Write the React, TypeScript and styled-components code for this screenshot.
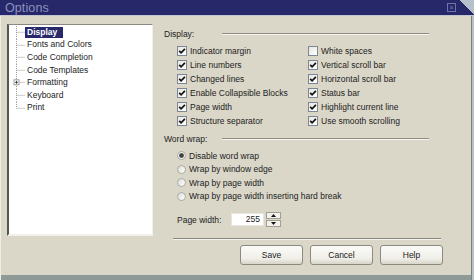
import * as React from 'react';
import styled, { createGlobalStyle } from 'styled-components';

const GlobalStyle = createGlobalStyle`
  html, body {
    margin: 0;
    padding: 0;
    background: #b7c1c9;
  }
  body {
    font-family: "Liberation Sans", Arial, sans-serif;
    font-size: 8.5px;
    color: #1c1c1c;
  }
`;

const Frame = styled.div`
  width: 474px;
  height: 280px;
  display: flex;
  flex-direction: column;
  overflow: hidden;
  background: #b7c1c9;
`;

const TitleBar = styled.div`
  height: 15px;
  flex: none;
  display: flex;
  align-items: center;
  justify-content: space-between;
  padding: 0 18px 0 5px;
  background: linear-gradient(225deg, #b5c0cb 0 10.5px, #26286a 10.5px);
  border-bottom: 1px solid #c3c6d2;
`;

const Title = styled.span`
  font-size: 12.5px;
  color: #8d93bd;
  letter-spacing: 0.1px;
  line-height: 15px;
  margin-top: 1px;
`;

const CloseBox = styled.span`
  width: 7px;
  height: 7px;
  border: 1px solid #6d74a6;
  display: flex;
  align-items: center;
  justify-content: center;
  color: #7a82b4;
  font-size: 7px;
  line-height: 1;
`;

const Body = styled.div`
  flex: 1;
  display: flex;
  flex-direction: column;
  background: #dad7c9;
  border-left: 1px solid #eeede6;
  border-right: 1px solid #7e8078;
  margin-right: 2px;
`;

const Main = styled.div`
  display: flex;
  padding: 8px 0 0 6px;
  height: 211px;
`;

const TreePanel = styled.div`
  width: 143px;
  height: 208px;
  flex: none;
  background: #fff;
  border-top: 1px solid #8c8a80;
  border-left: 2px solid #55554e;
  border-right: 1px solid #f1f0ea;
  border-bottom: 2px solid #f1f0ea;
  padding-top: 1px;
  display: flex;
  flex-direction: column;
`;

const TreeRow = styled.div`
  height: 12.6px;
  display: flex;
  align-items: center;
`;

const TreeLabel = styled.span<{ $selected?: boolean }>`
  padding: 1px 2px;
  line-height: 9px;
  background: ${p => (p.$selected ? '#27296a' : 'transparent')};
  color: ${p => (p.$selected ? '#fff' : '#1c1c1c')};
  font-weight: ${p => (p.$selected ? 'bold' : 'normal')};
  ${p => (p.$selected ? 'padding-right: 6px;' : '')}
`;

const Settings = styled.div`
  flex: none;
  width: 265px;
  display: flex;
  flex-direction: column;
  padding: 4px 0 0 11px;
`;

const SectionHead = styled.div<{ $gap?: number }>`
  display: flex;
  align-items: center;
  height: 12px;
  margin-top: ${p => p.$gap ?? 0}px;
`;

const SectionLabel = styled.span`
  width: 58px;
  flex: none;
`;

const Etched = styled.div`
  flex: 1;
  height: 0;
  border-top: 1px solid #8d8c80;
  border-bottom: 1px solid #f6f5ef;
`;

const CheckGrid = styled.div`
  display: grid;
  grid-template-columns: 131px 1fr;
  margin: 4px 0 0 13px;
`;

const OptionRow = styled.label<{ $h?: number }>`
  height: ${p => p.$h ?? 14}px;
  display: flex;
  align-items: center;
  gap: 3px;
  white-space: nowrap;
`;

const Box = styled.span`
  width: 8px;
  height: 8px;
  flex: none;
  border: 1px solid #7b8796;
  background: linear-gradient(135deg, #e6e5df, #fff);
  display: flex;
  align-items: center;
  justify-content: center;
`;

const RadioList = styled.div`
  display: flex;
  flex-direction: column;
  margin: 4px 0 0 13px;
`;

const RadioDot = styled.span<{ $on?: boolean }>`
  width: 7px;
  height: 7px;
  flex: none;
  border-radius: 50%;
  border: 1px solid #a9aba4;
  background: ${p => (p.$on
    ? 'radial-gradient(circle, #3d4140 0 1.8px, #9ea19d 2.4px, #f3f3ee 3px)'
    : 'linear-gradient(135deg, #dcdbd4, #fff)')};
`;

const WidthRow = styled.div`
  display: flex;
  align-items: center;
  margin: 10px 0 0 13px;
  height: 13px;
`;

const WidthLabel = styled.span`
  width: 54px;
`;

const NumberField = styled.span`
  width: 28px;
  height: 11px;
  background: #fff;
  border: 1px solid #e8e6de;
  text-align: right;
  padding-right: 3px;
  line-height: 11px;
  box-sizing: content-box;
`;

const Spinner = styled.span`
  display: flex;
  flex-direction: column;
  gap: 1px;
  margin-left: 2px;
`;

const SpinButton = styled.span`
  width: 13px;
  height: 5px;
  border: 1px solid #a19f94;
  background: #f2f1eb;
  display: flex;
  align-items: center;
  justify-content: center;
`;

const Footer = styled.div`
  display: flex;
  flex-direction: column;
  align-items: flex-end;
  padding: 3px 28px 0 0;
`;

const FooterRule = styled.div`
  width: 268px;
  margin-right: 2px;
  border-top: 1px solid #86867a;
  border-bottom: 1px solid #f4f3ec;
`;

const ButtonRow = styled.div`
  display: flex;
  gap: 7px;
  margin-top: 5px;
`;

const Button = styled.button`
  width: 63px;
  height: 20px;
  padding: 0;
  font-family: inherit;
  font-size: 8.5px;
  color: #1c1c1c;
  border: 1px solid #8c8a7f;
  border-radius: 3px;
  background: linear-gradient(#fbfbf8, #efeee8 70%, #d8d4c8);
`;

const BottomEdge = styled.div`
  margin-top: auto;
  height: 5px;
  background: #8e9a97;
`;

const Check = () => (
  <svg width="8" height="8" viewBox="0 0 8 8">
    <path d="M1.2 3.8 L3.1 5.8 L6.9 1.9" fill="none" stroke="#111" strokeWidth="1.7" />
  </svg>
);

const TreeLines = ({ last, expander }: { last?: boolean; expander?: boolean }) => (
  <svg width="16" height="12.6" viewBox="0 0 16 12.6" style={{ flex: 'none' }}>
    <line x1="7.5" y1="0" x2="7.5" y2={last ? 6.3 : 12.6} stroke="#9a9a9a" strokeDasharray="1 1" />
    <line x1="7.5" y1="6.3" x2="16" y2="6.3" stroke="#9a9a9a" strokeDasharray="1 1" />
    {expander && (
      <g>
        <rect x="5" y="3.8" width="5" height="5" fill="#fff" stroke="#8a8a8a" strokeWidth="0.8" />
        <line x1="6" y1="6.3" x2="9" y2="6.3" stroke="#222" strokeWidth="0.8" />
        <line x1="7.5" y1="4.8" x2="7.5" y2="7.8" stroke="#222" strokeWidth="0.8" />
      </g>
    )}
  </svg>
);

const Arrow = ({ up }: { up?: boolean }) => (
  <svg width="5" height="3" viewBox="0 0 5 3">
    <path d={up ? 'M0 3 L2.5 0 L5 3 Z' : 'M0 0 L2.5 3 L5 0 Z'} fill="#111" />
  </svg>
);

const treeItems = [
  { label: 'Display', selected: true },
  { label: 'Fonts and Colors' },
  { label: 'Code Completion' },
  { label: 'Code Templates' },
  { label: 'Formatting', expander: true },
  { label: 'Keyboard' },
  { label: 'Print' },
];

const leftChecks = [
  { label: 'Indicator margin', on: true },
  { label: 'Line numbers', on: true },
  { label: 'Changed lines', on: true },
  { label: 'Enable Collapsible Blocks', on: true },
  { label: 'Page width', on: true },
  { label: 'Structure separator', on: true },
];

const rightChecks = [
  { label: 'White spaces', on: false },
  { label: 'Vertical scroll bar', on: true },
  { label: 'Horizontal scroll bar', on: true },
  { label: 'Status bar', on: true },
  { label: 'Highlight current line', on: true },
  { label: 'Use smooth scrolling', on: true },
];

const wrapModes = [
  'Disable word wrap',
  'Wrap by window edge',
  'Wrap by page width',
  'Wrap by page width inserting hard break',
];

export default function App() {
  const cells = leftChecks.flatMap((c, i) => [c, rightChecks[i]]);
  return (
    <Frame>
      <GlobalStyle />
      <TitleBar>
        <Title>Options</Title>
        <CloseBox>×</CloseBox>
      </TitleBar>
      <Body>
        <Main>
          <TreePanel>
            {treeItems.map((t, i) => (
              <TreeRow key={t.label}>
                <TreeLines last={i === treeItems.length - 1} expander={t.expander} />
                <TreeLabel $selected={t.selected}>{t.label}</TreeLabel>
              </TreeRow>
            ))}
          </TreePanel>
          <Settings>
            <SectionHead>
              <SectionLabel>Display:</SectionLabel>
              <Etched />
            </SectionHead>
            <CheckGrid>
              {cells.map(c => (
                <OptionRow key={c.label}>
                  <Box>{c.on && <Check />}</Box>
                  {c.label}
                </OptionRow>
              ))}
            </CheckGrid>
            <SectionHead $gap={5}>
              <SectionLabel>Word wrap:</SectionLabel>
              <Etched />
            </SectionHead>
            <RadioList>
              {wrapModes.map((m, i) => (
                <OptionRow key={m} $h={13.5}>
                  <RadioDot $on={i === 0} />
                  {m}
                </OptionRow>
              ))}
            </RadioList>
            <WidthRow>
              <WidthLabel>Page width:</WidthLabel>
              <NumberField>255</NumberField>
              <Spinner>
                <SpinButton><Arrow up /></SpinButton>
                <SpinButton><Arrow /></SpinButton>
              </Spinner>
            </WidthRow>
          </Settings>
        </Main>
        <Footer>
          <FooterRule />
          <ButtonRow>
            <Button>Save</Button>
            <Button>Cancel</Button>
            <Button>Help</Button>
          </ButtonRow>
        </Footer>
        <BottomEdge />
      </Body>
    </Frame>
  );
}
